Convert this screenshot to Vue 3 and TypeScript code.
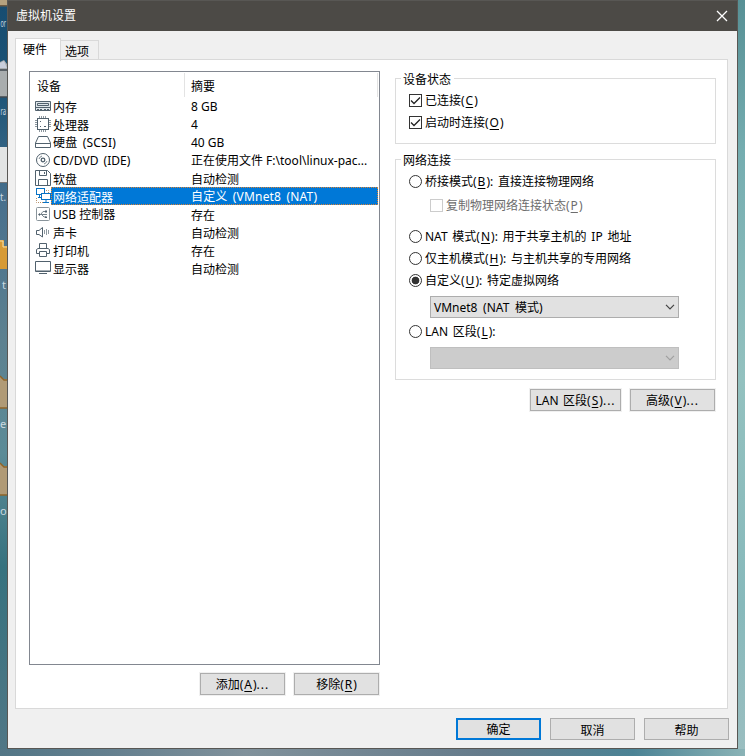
<script setup lang="ts">
interface Device { icon: string; name: string; summary: string }

const devices: Device[] = [
  { icon: 'memory', name: '内存', summary: '8 GB' },
  { icon: 'cpu', name: '处理器', summary: '4' },
  { icon: 'disk', name: '硬盘 (SCSI)', summary: '40 GB' },
  { icon: 'cd', name: 'CD/DVD (IDE)', summary: '正在使用文件 F:\\tool\\linux-pac...' },
  { icon: 'floppy', name: '软盘', summary: '自动检测' },
  { icon: 'network', name: '网络适配器', summary: '自定义 (VMnet8 (NAT)' },
  { icon: 'usb', name: 'USB 控制器', summary: '存在' },
  { icon: 'sound', name: '声卡', summary: '自动检测' },
  { icon: 'printer', name: '打印机', summary: '存在' },
  { icon: 'display', name: '显示器', summary: '自动检测' },
]
const selected = 5
const isHan = (s: string): boolean => /^[\u4e00-\u9fff]+$/.test(s)
</script>

<template>
  <div class="desktop">
    <svg class="strip" width="7" height="756" viewBox="0 0 7 756">
      <rect width="7" height="6" fill="#b5a27f" />
      <rect y="5" width="7" height="1.500" fill="#6d5b43" />
      <path d="M0 62L4 60L7 64V97H0Z" fill="#a9adae" />
      <path d="M0 63L4 61L7 68H0Z" fill="#c9cfdc" />
      <path d="M0 70H7M0 97H7" stroke="#404850" stroke-width="1.500" />
      <path d="M0 147H7V182H0Z" fill="#e2e4e4" />
      <path d="M0 182.500H7" stroke="#777" />
      <path d="M0 240H4V246H7V269H0Z" fill="#d79a35" />
      <path d="M0 241H3V247H7" stroke="#f6dda4" fill="none" />
      <path d="M0 376L4 379H7V408H0Z" fill="#b09a76" />
      <path d="M0 376L4 380H7M0 408H7" stroke="#8f6428" fill="none" stroke-width="1.500" />
      <path d="M0 463L4 466H7V495H0Z" fill="#b09a76" />
      <path d="M0 463L4 467H7M0 495H7" stroke="#8f6428" fill="none" stroke-width="1.500" />
      <g class="caption">
        <text x=".5" y="27" textLength="5.500" lengthAdjust="spacingAndGlyphs">or</text>
        <text x=".5" y="115" textLength="5.500" lengthAdjust="spacingAndGlyphs">ra</text>
        <text x="0" y="201" textLength="6" lengthAdjust="spacingAndGlyphs">t.</text>
        <text x="2" y="289">t</text><text x="0" y="428">e</text><text x="0" y="515">o</text>
      </g>
    </svg>
    <main class="window">
      <header class="titlebar">
        <span>虚拟机设置</span>
        <svg width="12" height="12" viewBox="0 0 12 12"><path d="M1 1L11 11M11 1L1 11" stroke="#fff" stroke-width="1.300" fill="none" /></svg>
      </header>
      <nav class="tabs">
        <div class="tab active">硬件</div>
        <div class="tab">选项</div>
      </nav>
      <section class="page">
        <div class="left">
          <div class="list">
            <div class="head"><span class="hname">设备</span><span class="hsum">摘要</span></div>
            <div v-for="(d, i) in devices" :key="d.icon" class="row" :class="[d.icon, { sel: i === selected }]">
              <svg class="icon" width="16" height="18" viewBox="0 0 16 18" fill="none" stroke="#51616d">
                <template v-if="d.icon === 'memory'">
                  <path d="M.5 4.500H15.500V13.500H.5Z" fill="#dfe6ea" />
                  <path d="M2.500 6.500H13.500V8.500H2.500ZM1 10.500H15" />
                  <path d="M2 12.500H4M5 12.500H7M9 12.500H11M12 12.500H14" />
                </template>
                <template v-else-if="d.icon === 'cpu'">
                  <path d="M4.500 1V4M6.500 1V4M8.500 1V4M10.500 1V4M4.500 14V17M6.500 14V17M8.500 14V17M10.500 14V17M0 5.500H3M0 7.500H3M0 9.500H3M0 11.500H3M13 5.500H16M13 7.500H16M13 9.500H16M13 11.500H16" stroke="#8d979e" />
                  <rect x="2.500" y="3.500" width="11" height="11" fill="#fff" />
                  <path d="M5 6.500H6M9 11.500H11M5 11.500H6" />
                </template>
                <template v-else-if="d.icon === 'disk'">
                  <path d="M3.500 3.500H12.500L15.500 10V14.500H.5V10ZM.5 10.500H15.500" />
                </template>
                <template v-else-if="d.icon === 'cd'">
                  <circle cx="8" cy="9" r="6.500" /><circle cx="8" cy="9" r="1.800" stroke-width="1.300" />
                  <path d="M4 8A4.500 4.500 0 0 1 7 5M9 13A4.500 4.500 0 0 0 12 10" stroke="#7c8991" />
                </template>
                <template v-else-if="d.icon === 'floppy'">
                  <path d="M.5 1.500H12.500L15.500 4.500V16.500H.5ZM4.500 1.500V6.500H11.500V1.500M3.500 16.500V10.500H12.500V16.500M9.500 3V5" />
                </template>
                <template v-else-if="d.icon === 'network'">
                  <path d="M1.500 11V15.500H8M9 3.500H13.500V7" stroke="#b69169" stroke-dasharray="1 1" />
                  <rect x="1.500" y="1.500" width="8" height="6" stroke="#0872c4" fill="#fff" />
                  <path d="M3 10.500H6M4.500 8V10" stroke="#0872c4" />
                  <rect x="6.500" y="6.500" width="9" height="6" stroke="#0872c4" fill="#fff" />
                  <path d="M11 13V15M8 15.500H14" stroke="#0872c4" />
                </template>
                <template v-else-if="d.icon === 'usb'">
                  <rect x="1.500" y="2.500" width="13" height="13" rx="1" stroke="#89949b" />
                  <path d="M4 9.500H12M6 9L8 6.500H10M7 10L9 12H11" stroke="#76838b" />
                  <path d="M3 9.500L5 8V11ZM10 5.500H12V7.500H10ZM10 11.500H12V13H10Z" fill="#51616d" stroke="none" />
                </template>
                <template v-else-if="d.icon === 'sound'">
                  <path d="M1.500 7.500H4L7.500 4.500V14L4 11.500H1.500Z" />
                  <path d="M9.500 7V11M11.500 6V12M13.500 7V11" stroke="#8f9aa1" />
                </template>
                <template v-else-if="d.icon === 'printer'">
                  <path d="M4.500 7V2.500H11.500V7M4 12.500H1.500V8.500L3 7.500H13L14.500 8.500V12.500H12M4.500 10.500H11.500V15.500H4.500Z" />
                </template>
                <template v-else>
                  <path d="M.5 2.500H15.500V12.500H.5ZM4 14.500H12M1 12H15" />
                </template>
              </svg>
              <div class="cells"><span class="name" :class="{ han: isHan(d.name) }">{{ d.name }}</span><span class="sum" :class="{ han: isHan(d.summary) }">{{ d.summary }}</span></div>
            </div>
          </div>
          <div class="actions">
            <button>添加(<u>A</u>)<span class="dots">...</span></button>
            <button>移除(<u>R</u>)</button>
          </div>
        </div>
        <div class="right">
          <fieldset class="status">
            <legend>设备状态</legend>
            <label><i class="box"><svg width="13" height="13" viewBox="0 0 13 13"><path d="M2 6.500L5 9.500L11 3.500" /></svg></i>已连接(<u>C</u>)</label>
            <label><i class="box"><svg width="13" height="13" viewBox="0 0 13 13"><path d="M2 6.500L5 9.500L11 3.500" /></svg></i>启动时连接(<u>O</u>)</label>
          </fieldset>
          <fieldset class="net">
            <legend>网络连接</legend>
            <label><i class="radio"></i>桥接模式(<u>B</u>): 直接连接物理网络</label>
            <label class="sub"><i class="box"></i>复制物理网络连接状态(<u>P</u>)</label>
            <label><i class="radio"></i>NAT 模式(<u>N</u>): 用于共享主机的 IP 地址</label>
            <label><i class="radio"></i>仅主机模式(<u>H</u>): 与主机共享的专用网络</label>
            <label><i class="radio on"></i>自定义(<u>U</u>): 特定虚拟网络</label>
            <div class="combo"><span>VMnet8 (NAT 模式)</span><svg width="10" height="6" viewBox="0 0 10 6"><path d="M1 .8L5 4.800L9 .8" /></svg></div>
            <label class="lan"><i class="radio"></i>LAN 区段(<u>L</u>):</label>
            <div class="combo off"><span></span><svg width="10" height="6" viewBox="0 0 10 6"><path d="M1 .8L5 4.800L9 .8" /></svg></div>
          </fieldset>
          <div class="extra">
            <button class="wide">LAN 区段(<u>S</u>)<span class="dots">...</span></button>
            <button>高级(<u>V</u>)<span class="dots">...</span></button>
          </div>
        </div>
      </section>
      <footer>
        <button class="primary">确定</button>
        <button>取消</button>
        <button>帮助</button>
      </footer>
    </main>
  </div>
</template>

<style>
body { margin: 0; overflow: hidden; }
</style>

<style scoped>
* { box-sizing: border-box; }
.desktop {
  width: 745px; height: 756px; display: flex; overflow: hidden;
  font: 12px/18px "Noto Sans", "Noto Sans CJK SC", sans-serif; color: #000;
  background:
    linear-gradient(90deg, #527686, #65808f 15%, #80919b 33%, #657b8b 65%, #4b8395 85%, #8ab3b6) 0 749px / 745px 7px no-repeat,
    linear-gradient(180deg, #579095, #75adb0 20%, #93c1bf 50%, #87b9bb 80%, #9bbec0) 738px 0 / 7px 756px no-repeat,
    linear-gradient(180deg, #174c70, #1c5477 12%, #48708d 27%, #5d8190 45%, #5b8b97 60%, #36727f 75%, #517786);
}
.strip { flex: none; display: block; }
.caption { font-size: 11px; fill: #cbd9e0; }
.window { width: 731px; height: 749px; background: #f0f0f0; border: 1px solid #585754; flex: none; }
.titlebar { height: 30px; background: #4c4a46; color: #fff; display: flex; align-items: center; justify-content: space-between; padding: 0 9px 0 8px; }
.tabs { height: 29px; padding: 7px 0 0 7px; display: flex; align-items: flex-end; position: relative; z-index: 1; }
.tab { width: 38px; height: 20px; border: 1px solid #d9d9d9; border-left: 0; border-bottom: 0; padding: 2px 0 0 4px; line-height: 18px; }
.tab.active { width: 46px; height: 23px; background: #fff; border-left: 1px solid #d9d9d9; padding: 2px 0 0 7px; margin-bottom: -1px; line-height: 17px; }
.page { margin: -1px 0 0 7px; width: 713px; height: 650px; background: #fff; border: 1px solid #d9d9d9; padding: 11px 0 0 13px; display: flex; gap: 15px; }
.left { width: 351px; }
.list { width: 351px; height: 594px; border: 1px solid #828790; }
.head { height: 25px; display: flex; padding: 1px 0 0 7px; }
.head span { line-height: 27px; height: 24px; border-right: 1px solid #e3e3e3; }
.hname { width: 148px; }
.hsum { width: 193px; padding-left: 6px; }
.row { height: 18px; display: flex; padding-left: 5px; }
.icon { flex: none; }
.cells { display: flex; width: 327px; height: 18px; border: 1px solid transparent; padding-left: 1px; line-height: 18px; white-space: nowrap; }
.cells .han { padding-top: 1px; }
.name { width: 138px; }
.disk .name { word-spacing: 2px; letter-spacing: .2px; }
.cd .name { word-spacing: 2px; }
.network .sum { word-spacing: 2px; letter-spacing: .18px; }
.sel .cells { background: #0078d7; border: 1px dotted #d98235; color: #fff; }
.actions { display: flex; justify-content: flex-end; gap: 9px; margin-top: 8px; padding-right: 1px; }
button { width: 85px; height: 22px; border: 1px solid #adadad; background: #e1e1e1; padding: 1px 0 0; margin: 0; font: inherit; line-height: 21px; color: #000; text-align: center; white-space: nowrap; }
.actions button, .extra button { box-shadow: 0 0 0 1px #f0f0f0; line-height: 20px; }
.dots { letter-spacing: 1px; }
.right { width: 321px; }
fieldset { width: 321px; margin: 0; padding: 0; border: 1px solid #dcdcdc; min-width: 0; }
legend { float: left; height: 18px; margin: -10px 0 3px 5px; padding: 0 3px 0 2px; background: #fff; line-height: 21px; }
.status { height: 66px; margin-top: 7px; }
.net { height: 221px; margin-top: 15px; }
label { clear: both; display: flex; align-items: center; height: 22px; padding-left: 13px; white-space: pre; word-spacing: 1.600px; }
i { width: 13px; height: 13px; flex: none; margin: 0 3px 2px 0; display: block; }
.box { border: 1px solid #333; background: #fff; }
.box svg { display: block; margin: -1px; fill: none; stroke: #222; stroke-width: 1.300; }
.radio { border: 1px solid #333; border-radius: 50%; }
.radio.on { background: radial-gradient(circle, #333 0 3.500px, #fff 4.200px); }
.sub { height: 26px; padding-left: 34px; color: #6d6d6d; margin-bottom: 7px; }
.sub .box { border-color: #ccc; }
.combo { width: 249px; height: 22px; margin: 4px 0 0 34px; border: 1px solid #adadad; background: #e1e1e1; display: flex; align-items: center; justify-content: space-between; padding: 0 3px; word-spacing: 2.500px; }
.combo span { padding-top: 2px; }
.combo svg { fill: none; stroke: #444; stroke-width: 1.200; }
.combo.off { background: #ccc; border-color: #bfbfbf; }
.combo.off svg { stroke: #a0a0a0; }
.lan { margin-top: 3px; }
.extra { display: flex; justify-content: flex-end; gap: 9px; margin-top: 9px; padding-right: 1px; }
.extra .wide { width: 91px; word-spacing: 1.500px; }
footer { display: flex; justify-content: flex-end; gap: 9px; padding: 9px 8px 0 0; }
.primary { border: 2px solid #0078d7; line-height: 19px; padding: 0; }
u { text-underline-offset: 2px; text-decoration-thickness: 1px; margin: 0 1px; }
</style>
